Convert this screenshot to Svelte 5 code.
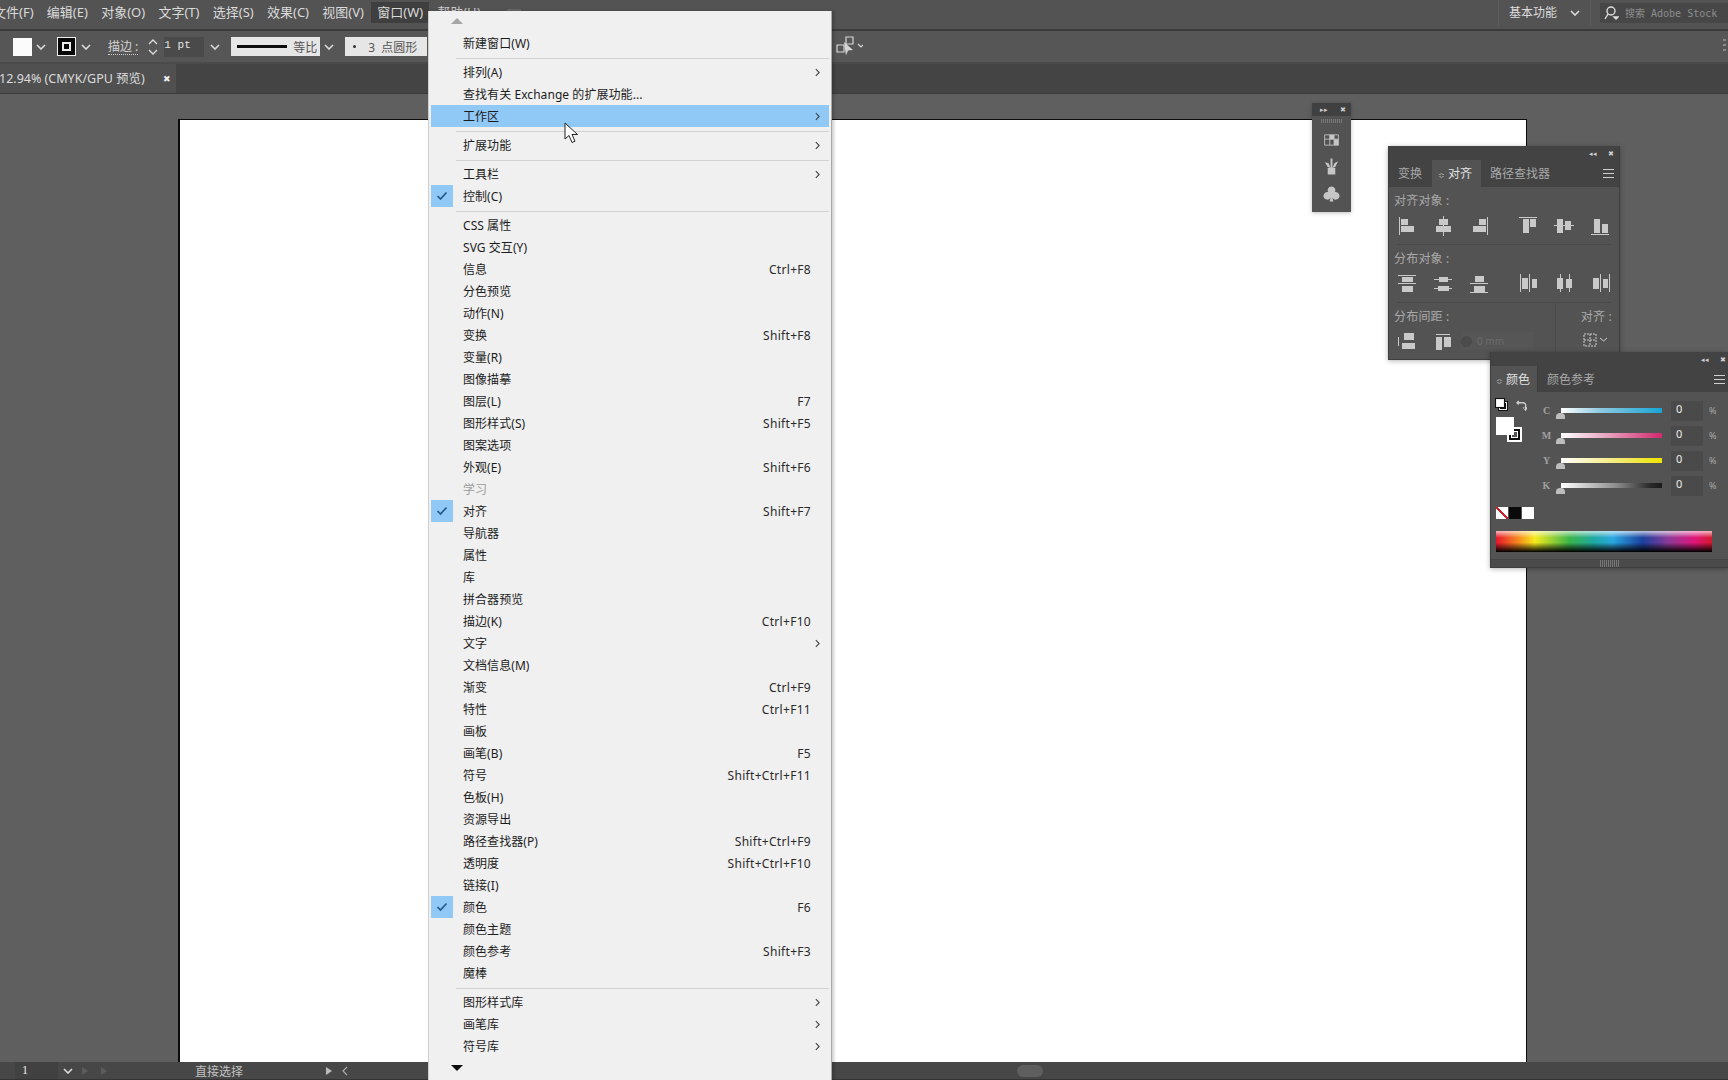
<script>
  const topMenu = ['编辑(E)', '对象(O)', '文字(T)', '选择(S)', '效果(C)', '视图(V)'];
  const S = { sep: true };
  const menu = [
    { t: '新建窗口(W)' }, S,
    { t: '排列(A)', sub: 1 }, { t: '查找有关 Exchange 的扩展功能...' }, { t: '工作区', sub: 1, hi: 1 }, S,
    { t: '扩展功能', sub: 1 }, S,
    { t: '工具栏', sub: 1 }, { t: '控制(C)', chk: 1 }, S,
    { t: 'CSS 属性' }, { t: 'SVG 交互(Y)' }, { t: '信息', k: 'Ctrl+F8' }, { t: '分色预览' }, { t: '动作(N)' },
    { t: '变换', k: 'Shift+F8' }, { t: '变量(R)' }, { t: '图像描摹' }, { t: '图层(L)', k: 'F7' },
    { t: '图形样式(S)', k: 'Shift+F5' }, { t: '图案选项' }, { t: '外观(E)', k: 'Shift+F6' }, { t: '学习', dis: 1 },
    { t: '对齐', k: 'Shift+F7', chk: 1 }, { t: '导航器' }, { t: '属性' }, { t: '库' }, { t: '拼合器预览' },
    { t: '描边(K)', k: 'Ctrl+F10' }, { t: '文字', sub: 1 }, { t: '文档信息(M)' }, { t: '渐变', k: 'Ctrl+F9' },
    { t: '特性', k: 'Ctrl+F11' }, { t: '画板' }, { t: '画笔(B)', k: 'F5' }, { t: '符号', k: 'Shift+Ctrl+F11' },
    { t: '色板(H)' }, { t: '资源导出' }, { t: '路径查找器(P)', k: 'Shift+Ctrl+F9' }, { t: '透明度', k: 'Shift+Ctrl+F10' },
    { t: '链接(I)' }, { t: '颜色', k: 'F6', chk: 1 }, { t: '颜色主题' }, { t: '颜色参考', k: 'Shift+F3' }, { t: '魔棒' }, S,
    { t: '图形样式库', sub: 1 }, { t: '画笔库', sub: 1 }, { t: '符号库', sub: 1 }
  ];
  const sliders = [
    { l: 'C', c: 'cyan' }, { l: 'M', c: 'magenta' }, { l: 'Y', c: 'yellow' }, { l: 'K', c: 'black' }
  ];
  const alignRow = [
    [[4,4,1,18],[6,6,7,6],[6,13,13,6]],
    [[12,3,1,20],[8,6,9,6],[5,13,15,6]],
    [[20,4,1,18],[12,6,7,6],[6,13,13,6]],
    [[3,4,18,1],[7,6,6,14],[14,6,6,8]],
    [[2,12,20,1],[5,6,6,14],[13,8,6,9]],
    [[3,21,18,1],[6,6,6,14],[14,11,6,9]]
  ];
  const distRow = [
    [[3,4,18,1],[7,6,11,5],[3,12,18,1],[7,15,11,6]],
    [[3,8,18,1],[8,6,9,5],[3,17,18,1],[7,15,11,5]],
    [[3,12,18,1],[8,5,9,6],[3,21,18,1],[7,15,11,6]],
    [[4,3,1,18],[6,7,6,11],[13,3,1,18],[16,8,5,9]],
    [[8,3,1,18],[5,7,6,11],[17,3,1,18],[14,8,6,9]],
    [[12,3,1,18],[5,7,6,11],[21,3,1,18],[15,8,5,9]]
  ];
</script>

<div class="app">
  <header class="top">
    <span class="tm first">文件(F)</span>
    {#each topMenu as m}<span class="tm">{m}</span>{/each}
    <span class="tm win">窗口(W)</span>
    <span class="tm help">帮助(H)</span>
    <span class="tm bridge">▦▦</span>
    <div class="spacer"></div>
    <div class="workspace">基本功能 <svg class="chev" viewBox="0 0 10 6"><path d="M1 1l4 4 4-4" /></svg></div>
    <div class="search">
      <svg viewBox="0 0 16 16" class="mag"><circle cx="8" cy="6" r="4" /><path d="M5 9l-3 5M11 12h4l-2 2z" /></svg>
      <span>搜索 Adobe Stock</span>
    </div>
  </header>

  <div class="control">
    <div class="fillbox"></div>
    <svg class="chev c1" viewBox="0 0 10 6"><path d="M1 1l4 4 4-4" /></svg>
    <div class="strokebox"><i></i></div>
    <svg class="chev c2" viewBox="0 0 10 6"><path d="M1 1l4 4 4-4" /></svg>
    <span class="slabel">描边 :</span>
    <svg class="stepper" viewBox="0 0 12 20"><path d="M2 7l4-4 4 4M2 13l4 4 4-4" /></svg>
    <div class="ptinput">1 pt</div>
    <svg class="chev c3" viewBox="0 0 10 6"><path d="M1 1l4 4 4-4" /></svg>
    <div class="lightbox style"><b></b><span>等比</span></div>
    <svg class="chev c4" viewBox="0 0 10 6"><path d="M1 1l4 4 4-4" /></svg>
    <div class="lightbox brush"><em></em><span>3 点圆形</span></div>
    <div class="spacer"></div>
    <svg class="grip" viewBox="0 0 3 16"><path d="M0 0h3v2H0zM0 5h3v2H0zM0 10h3v2H0z" /></svg>
    <svg class="reshape" viewBox="0 0 28 22"><path d="M2 10h7v7H2zM11 2h7v7h-7z" /><path class="fillp" d="M9 7l9 8-5 .5-2 5z" /><path d="M23 9l3 3 3-3" /></svg>
  </div>

  <div class="tabs">
    <div class="doc">
      <span class="doctitle">12.94% (CMYK/GPU 预览)</span>
      <span class="docx">✖</span>
    </div>
  </div>

  <main class="canvas">
    <div class="artboard"></div>
  </main>

  <footer class="status">
    <div class="pg">1</div>
    <svg class="chev c5" viewBox="0 0 10 6"><path d="M1 1l4 4 4-4" /></svg>
    <span class="fade"></span><span class="fade"></span>
    <span class="mode">直接选择</span>
    <span class="play"></span>
    <svg class="lt" viewBox="0 0 6 10"><path d="M5 1L1 5l4 4" /></svg>
    <div class="thumb"></div>
  </footer>

  <aside class="mini">
    <div class="minihead"><span>▸▸</span><span>✖</span></div>
    <div class="grip2"></div>
    <svg viewBox="0 0 18 14" class="mi m1"><path d="M1 1h16v12H1zM1 6h16M7 1v12M12 1v12" /><path class="solid" d="M7 1h5v5H7zM12 6h5v7h-5z" /></svg>
    <svg viewBox="0 0 18 20" class="mi m2"><path class="solid" d="M5 12h8v7H5zM8 2h2v10H8zM2 6l4 1 2 5-3-1zM16 5l-4 2-2 5 3-1z" /></svg>
    <svg viewBox="0 0 18 18" class="mi m3"><path class="solid" d="M9 1a4 4 0 0 1 3.500 6A4 4 0 1 1 10 13l1 4H7l1-4A4 4 0 1 1 5.500 7 4 4 0 0 1 9 1z" /></svg>
  </aside>

  <section class="panel align">
    <div class="phead"><span class="pcol">◂◂</span><span class="px">✖</span></div>
    <div class="ptabs">
      <span class="ptab t1">变换</span>
      <span class="ptab active"><small>≎</small>对齐</span>
      <span class="ptab t3">路径查找器</span>
      <span class="burger"><i></i><i></i><i></i></span>
    </div>
    <div class="ptitle">对齐对象 :</div>
    <div class="iconrow">
      {#each alignRow as g}
        <svg viewBox="0 0 24 24" class="ai">{#each g as r}<rect x={r[0]} y={r[1]} width={r[2]} height={r[3]} />{/each}</svg>
      {/each}
    </div>
    <div class="phr"></div>
    <div class="ptitle">分布对象 :</div>
    <div class="iconrow">
      {#each distRow as g}
        <svg viewBox="0 0 24 24" class="ai">{#each g as r}<rect x={r[0]} y={r[1]} width={r[2]} height={r[3]} />{/each}</svg>
      {/each}
    </div>
    <div class="phr"></div>
    <div class="pfoot">
      <div class="pleft">
        <div class="ptitle">分布间距 :</div>
        <div class="dist">
          <svg viewBox="0 0 24 24" class="ai"><rect x="3" y="8" width="1" height="9" /><rect x="9" y="4" width="10" height="7" /><rect x="7" y="14" width="13" height="6" /></svg>
          <svg viewBox="0 0 24 24" class="ai"><rect x="5" y="5" width="14" height="1" /><rect x="5" y="8" width="6" height="13" /><rect x="13" y="8" width="7" height="10" /></svg>
          <div class="disinput"><i></i><span>0 mm</span></div>
        </div>
      </div>
      <div class="pright">
        <div class="ptitle end">对齐 :</div>
        <svg viewBox="0 0 26 14" class="aligto"><rect x="1" y="1" width="12" height="12" /><path d="M7 1v12M1 7h12" /><path class="ch" d="M17 5l3.500 3L24 5" /></svg>
      </div>
    </div>
  </section>

  <section class="panel color">
    <div class="phead"><span class="pcol">◂◂</span><span class="px">✖</span></div>
    <div class="ptabs ct">
      <span class="ptab active cta"><small>≎</small>颜色</span>
      <span class="ptab t2">颜色参考</span>
      <span class="burger"><i></i><i></i><i></i></span>
    </div>
    <div class="cbody">
      <div class="cleft">
        <div class="ctop">
          <div class="mini-sw"><i></i><b></b></div>
          <svg viewBox="0 0 12 12" class="swap"><path d="M1 3h7a2.500 2.500 0 0 1 2.500 2.500V10M8 8l2.500 3L12 8M3 1L1 3l2 2" /></svg>
        </div>
        <div class="fs">
          <div class="st"><i></i></div>
          <div class="fl"></div>
        </div>
      </div>
      <div class="crows">
        {#each sliders as s}
          <div class="crow">
            <span class="cl">{s.l}</span>
            <div class="track {s.c}"><i></i></div>
            <div class="cinput">0</div>
            <span class="pct">%</span>
          </div>
        {/each}
      </div>
    </div>
    <div class="quick">
      <span class="none"></span><span class="blk"></span><span class="wht"></span>
    </div>
    <div class="spectrum"><div class="shade"></div></div>
    <div class="cfoot"><i></i></div>
  </section>

  <nav class="menu">
    <div class="ends"><span class="up"></span></div>
    {#each menu as m}
      {#if m.sep}
        <div class="sep"></div>
      {:else}
        <div class="row" class:hi={m.hi} class:dis={m.dis}>
          <span class="tick" class:checked={m.chk}>
            {#if m.chk}<svg viewBox="0 0 12 10"><path d="M1.500 5l3 3 6-6.500" /></svg>{/if}
          </span>
          <span class="label">{m.t}</span>
          {#if m.k}<span class="key">{m.k}</span>{/if}
          {#if m.sub}<svg class="arrow" viewBox="0 0 6 10"><path d="M1 1l4 4-4 4" /></svg>{/if}
        </div>
      {/if}
    {/each}
    <div class="ends down"><span class="dn"></span></div>
  </nav>

  <svg class="cursor" viewBox="0 0 14 22"><path d="M1 1v16l4-3.500 3 7 3-1.300-3-6.700h5.500z" /></svg>
</div>

<style>
  :global(body) { margin: 0; background: #5f5f5f; overflow: hidden; }
  .app {
    position: relative; width: 1728px; height: 1080px; overflow: hidden;
    display: flex; flex-direction: column;
    font-family: "Noto Sans", "Noto Sans CJK SC", sans-serif; font-size: 12px; color: #d8d8d8;
  }
  .spacer { flex: 1; }
  svg { display: block; }
  .chev { width: 10px; height: 6px; fill: none; stroke: #dcdcdc; stroke-width: 1.600; flex: none; }

  .top {
    flex: none; background: #535353; border-bottom: 2px solid #3a3a3a;
    display: flex; align-items: center; padding-bottom: 4px; box-sizing: border-box; height: 31px;
  }
  .tm { margin-right: 13.300px; line-height: 21px; white-space: nowrap; color: #dadada; font-size: 13px; }
  .first { margin-left: -7px; }
  .win { background: #3f3f3f; margin-left: -6px; padding: 0 6px; margin-right: 8px; }
  .help { margin-right: 26px; color: #c8c8c8; }
  .bridge { font-size: 8px; color: #aaa; margin: 0; letter-spacing: -1px; }
  .workspace { display: flex; align-items: center; gap: 13px; color: #dcdcdc; font-size: 12px; border-left: 1px solid #5c5c5c; border-right: 1px solid #5c5c5c; padding: 0 10px 0 10px; height: 26px; margin-right: 9px; line-height: 20px; }
  .search { width: 128px; height: 20px; background: #474747; display: flex; align-items: center; gap: 6px; padding-left: 3px; box-sizing: border-box; }
  .search span { font-family: "DejaVu Sans Mono", "Noto Sans CJK SC", monospace; font-size: 10px; color: #8d8d8d; white-space: nowrap; }
  .mag { width: 16px; height: 16px; fill: #ddd; stroke: #ddd; stroke-width: 1.400; }
  .mag circle { fill: none; }

  .control {
    height: 31px; flex: none; background: #565656; border-bottom: 2px solid #4a4a4a;
    display: flex; align-items: center; padding-left: 13px; position: relative;
  }
  .fillbox { width: 19px; height: 18px; background: #fbfbfb; }
  .c1 { margin-left: 4px; }
  .strokebox { width: 17px; height: 17px; margin-left: 11px; background: #080808; border: 1px solid #eee; display: grid; place-items: center; }
  .strokebox i { width: 5px; height: 5px; border: 2px solid #eee; }
  .c2 { margin-left: 5px; }
  .slabel { margin-left: 17px; color: #d5d5d5; border-bottom: 1px dotted #ccc; line-height: 15px; }
  .stepper { width: 12px; height: 20px; margin-left: 9px; fill: none; stroke: #ddd; stroke-width: 1.300; }
  .ptinput { width: 40px; height: 20px; margin-left: 5px; background: #4a4a4a; font-family: "Liberation Mono", monospace; font-size: 11px; line-height: 16px; color: #e4e4e4; }
  .c3 { margin-left: 6px; }
  .lightbox { height: 19px; background: #e6e6e6; color: #555; display: flex; align-items: center; }
  .style { width: 89px; margin-left: 11px; padding-left: 6px; box-sizing: border-box; gap: 6px; }
  .style b { width: 50px; height: 3px; background: #0c0c0c; }
  .c4 { margin-left: 4px; }
  .brush { width: 82px; margin-left: 11px; padding-left: 8px; box-sizing: border-box; gap: 12px; word-spacing: 3px; }
  .brush em { width: 3px; height: 3px; border-radius: 50%; background: #333; }
  .grip { width: 3px; height: 16px; fill: #888; margin-right: 2px; }
  .reshape { position: absolute; left: 835px; top: 4px; width: 28px; height: 22px; fill: none; stroke: #d5d5d5; stroke-width: 1.200; }
  .reshape .fillp { fill: #d5d5d5; stroke: none; }

  .tabs { height: 29px; flex: none; background: #444; border-bottom: 1px solid #3c3c3c; display: flex; }
  .doc { width: 176px; background: #505050; display: flex; align-items: center; overflow: hidden; position: relative; padding-bottom: 2px; box-sizing: border-box; }
  .doctitle { white-space: nowrap; color: #dcdcdc; margin-left: -1px; font-size: 12.500px; }
  .docx { position: absolute; left: 163px; top: 8px; font-size: 9px; color: #eee; }

  .canvas { flex: 1; background: #5f5f5f; padding: 25px 0 0 178px; min-height: 0; }
  .artboard { width: 1346px; height: 100%; background: #fff; border: solid #0c0c0c; border-width: 1px 1px 0 2px; }

  .status { height: 18px; flex: none; background: #474747; display: flex; align-items: center; border-bottom: 1px solid #333; box-sizing: border-box; position: relative; }
  .pg { width: 43px; margin-left: 15px; height: 17px; background: #414141; padding-left: 7px; box-sizing: border-box; line-height: 17px; font-family: "Liberation Serif", serif; font-size: 12px; color: #eee; }
  .c5 { margin-left: 5px; }
  .fade { width: 0; height: 0; margin-left: 9px; border: 4px solid transparent; border-left: 6px solid #5c5c5c; }
  .mode { margin-left: 84px; color: #c2c2c2; }
  .play { margin-left: 83px; width: 0; height: 0; border: 4px solid transparent; border-left: 6px solid #bbb; }
  .lt { width: 6px; height: 10px; margin-left: 6px; fill: none; stroke: #aaa; stroke-width: 1.200; }
  .thumb { position: absolute; left: 1017px; top: 3px; width: 26px; height: 12px; border-radius: 6px; background: #5e5e5e; }

  .mini { position: absolute; left: 1312px; top: 103px; width: 39px; height: 109px; background: #535353; box-shadow: 0 1px 4px rgba(0,0,0,.25); display: flex; flex-direction: column; align-items: center; }
  .minihead { align-self: stretch; height: 13px; background: #404040; display: flex; justify-content: space-between; padding: 0 5px 0 8px; font-size: 7px; line-height: 13px; color: #ccc; }
  .grip2 { width: 22px; height: 4px; margin-top: 3px; background: repeating-linear-gradient(90deg, #777 0 1px, #555 1px 2px); }
  .mi { width: 17px; fill: none; stroke: #c6c6c6; stroke-width: 1; }
  .mi .solid { fill: #c6c6c6; stroke: none; }
  .m1 { height: 12px; margin-top: 11px; }
  .m2 { height: 20px; margin-top: 10px; }
  .m3 { height: 18px; margin-top: 9px; }

  .panel { position: absolute; background: #535353; box-shadow: 0 1px 5px rgba(0,0,0,.3); color: #b4b4b4; display: flex; flex-direction: column; box-sizing: border-box; }
  .phead { height: 14px; flex: none; background: #434343; display: flex; justify-content: flex-end; align-items: center; gap: 11px; padding-right: 5px; font-size: 7px; color: #d0d0d0; }
  .align { left: 1388px; top: 146px; width: 232px; height: 214px; border: 1px solid #3e3e3e; border-top: 0; }
  .ptabs { height: 27px; flex: none; background: #434343; display: flex; align-items: stretch; position: relative; line-height: 28px; }
  .ptab { color: #a8a8a8; white-space: nowrap; }
  .ptab.active { background: #535353; color: #e2e2e2; }
  .ptab small { font-size: 8px; margin-right: 3px; color: #aaa; }
  .t1 { margin-left: 9px; }
  .align .active { margin-left: 10px; width: 49px; box-sizing: border-box; padding-left: 6px; }
  .t3 { margin-left: 9px; }
  .burger { position: absolute; right: 5px; top: 9px; width: 11px; height: 9px; display: flex; flex-direction: column; justify-content: space-between; }
  .burger i { height: 1px; background: #cfcfcf; }
  .ptitle { color: #a9a9a9; padding-left: 5px; line-height: 16px; margin-top: 6px; letter-spacing: .2px; white-space: nowrap; }
  .iconrow { display: flex; padding-left: 6px; height: 26px; margin-top: 4px; }
  .ai { width: 24px; height: 24px; margin-right: 12px; fill: #c9c9c9; flex: none; }
  .iconrow .ai:nth-child(4) { margin-left: 13px; }
  .phr { height: 1px; background: #4a4a4a; margin: 5px 8px 0; }
  .pfoot { display: flex; flex: 1; }
  .pleft { width: 166px; }
  .pright { flex: 1; border-left: 1px solid #4c4c4c; }
  .end { text-align: right; padding-right: 7px; }
  .dist { display: flex; align-items: center; padding-left: 6px; margin-top: 4px; }
  .dist .ai { margin-right: 12px; }
  .disinput { width: 72px; height: 18px; display: flex; align-items: center; gap: 5px; color: #6b6b6b; background: #565656; font-size: 10px; margin-left: -6px; }
  .disinput i { width: 11px; height: 11px; border-radius: 50%; background: #4b4b4b; }
  .aligto { width: 26px; height: 14px; margin: 8px 0 0 27px; fill: none; stroke: #d0d0d0; stroke-width: 1; stroke-dasharray: 2 1; }
  .aligto .ch { stroke-dasharray: none; }

  .color { left: 1490px; top: 352px; width: 238px; height: 216px; border-bottom: 1px solid #3e3e3e; border-left: 1px solid #3e3e3e; }
  .color .phead { padding-right: 2px; }
  .ct { height: 26px; }
  .cta { width: 47px; padding-left: 5px; box-sizing: border-box; border-right: 1px solid #3c3c3c; }
  .t2 { margin-left: 9px; }
  .color .burger { right: 3px; }
  .cbody { display: flex; height: 113px; padding-left: 5px; }
  .cleft { width: 46px; }
  .ctop { display: flex; align-items: center; gap: 8px; margin-top: 7px; }
  .mini-sw { position: relative; width: 12px; height: 12px; }
  .mini-sw i, .mini-sw b { position: absolute; width: 6px; height: 6px; border: 1px solid #eee; }
  .mini-sw b { left: 0; top: 0; background: #fff; outline: 1px solid #111; }
  .mini-sw i { left: 3px; top: 3px; background: #111; outline: 1px solid #111; }
  .swap { width: 11px; height: 11px; fill: none; stroke: #ccc; stroke-width: 1.500; }
  .fs { position: relative; width: 28px; height: 28px; margin-top: 6px; }
  .fl { position: absolute; left: 0; top: 0; width: 18px; height: 18px; background: #fff; }
  .st { position: absolute; left: 11px; top: 10px; width: 15px; height: 15px; box-sizing: border-box; border: 2px solid #fff; background: #0c0c0c; display: grid; place-items: center; }
  .st i { width: 7px; height: 7px; border: 1px solid #fff; background: #535353; box-sizing: border-box; }
  .crows { flex: 1; padding-top: 6px; }
  .crow { height: 25px; display: flex; align-items: center; position: relative; }
  .cl { width: 19px; font-family: "Liberation Serif", serif; font-weight: 700; font-size: 10px; color: #a0a0a0; margin-left: -5px; text-align: center; }
  .track { width: 101px; height: 5px; margin-left: 5px; position: relative; }
  .track i { position: absolute; left: -5px; top: 5px; width: 9px; height: 6px; border-radius: 4px 4px 0 0; background: #bdbdbd; }
  .cyan { background: linear-gradient(90deg, #fff, #8cc8e0 40%, #17a5d5); }
  .magenta { background: linear-gradient(90deg, #fff, #e49ab8 50%, #d3286f); }
  .yellow { background: linear-gradient(90deg, #fff, #f3e96c 60%, #efe500); }
  .black { background: linear-gradient(90deg, #fff, #8c8c8c 55%, #2a2a2a 88%, #1a1a1a); }
  .cinput { width: 32px; height: 20px; margin-left: 9px; background: #4a4a4a; color: #eee; padding-left: 5px; box-sizing: border-box; line-height: 16px; font-size: 11px; }
  .pct { margin-left: 6px; font-size: 9px; color: #aaa; }
  .quick { display: flex; gap: 1px; padding-left: 5px; height: 12px; margin-top: 2px; }
  .quick span { width: 12px; height: 12px; }
  .none { background: linear-gradient(135deg, #fff 44%, #c8202c 44% 56%, #fff 56%); transform: scaleX(-1); }
  .blk { background: #0a0a0a; }
  .wht { background: #fff; }
  .spectrum { margin: 12px 0 0 5px; width: 216px; height: 21px; position: relative; background: linear-gradient(90deg, #e6142c, #f7931e 11%, #f6ea1c 18%, #3bb54a 34%, #1fa9a0 45%, #2aa7e0 54%, #1b3f9e 68%, #8d3a98 80%, #e0157a 92%, #d41a2c); }
  .shade { position: absolute; inset: 0; background: linear-gradient(180deg, rgba(255,255,255,.7), rgba(255,255,255,0) 32%, rgba(0,0,0,0) 55%, #000); }
  .cfoot { margin-top: 7px; height: 7px; flex: none; background: #4a4a4a; display: flex; justify-content: center; border-top: 1px solid #444; }
  .cfoot i { width: 20px; background: repeating-linear-gradient(90deg, #777 0 1px, #4a4a4a 1px 2px); }

  .menu {
    position: absolute; left: 428px; top: 11px; width: 404px; height: 1069px;
    background: #f0f0f0; border-right: 1px solid #a8a8a8; border-left: 1px solid #cfcfcf; box-sizing: border-box;
    box-shadow: 2px 0 3px rgba(0,0,0,.2); color: #1c1c1c; font-size: 12px;
    display: flex; flex-direction: column; padding: 0 2px;
  }
  .ends { height: 21px; flex: none; position: relative; }
  .down { height: 23px; }
  .up, .dn { position: absolute; left: 20px; width: 0; height: 0; border-left: 6px solid transparent; border-right: 6px solid transparent; }
  .up { top: 7px; border-bottom: 6px solid #a6a6a6; }
  .dn { top: 8px; border-top: 6px solid #0c0c0c; }
  .sep { height: 7px; flex: none; position: relative; }
  .sep::after { content: ""; position: absolute; left: 25px; right: 0; top: 4px; height: 1px; background: #d2d2d2; }
  .row { height: 22px; flex: none; display: flex; align-items: center; position: relative; white-space: nowrap; }
  .row.hi { background: #90c8f6; }
  .row.dis { color: #9b9b9b; }
  .tick { width: 22px; height: 22px; flex: none; display: grid; place-items: center; margin-right: 10px; }
  .tick.checked { background: #90c8f6; }
  .tick svg { width: 12px; height: 10px; fill: none; stroke: #235a8c; stroke-width: 1.700; }
  .label { flex: 1; letter-spacing: .06px; }
  .key { margin-right: 18px; color: #2a2a2a; letter-spacing: .3px; }
  .arrow { position: absolute; right: 9px; top: 7px; width: 5px; height: 9px; fill: none; stroke: #444; stroke-width: 1.300; }
  .cursor { position: absolute; left: 564px; top: 122px; width: 14px; height: 22px; fill: #fff; stroke: #222; stroke-width: 1; }
</style>
